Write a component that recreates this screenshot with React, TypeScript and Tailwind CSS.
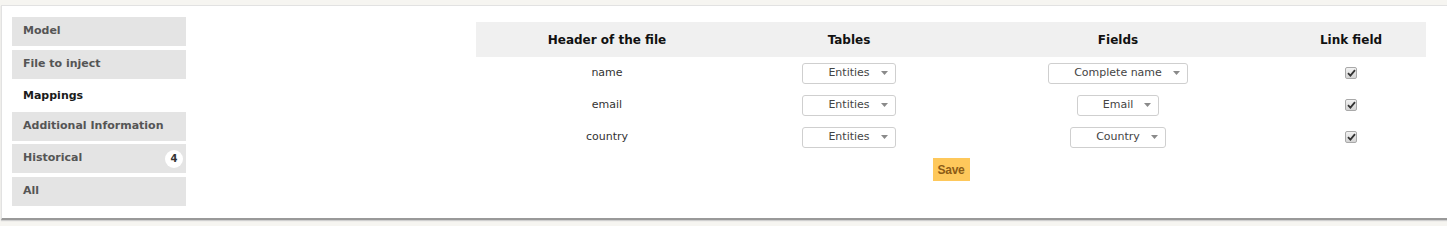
import React from 'react';

const tabs = [
  { label: 'Model', mt: 'mt-0' },
  { label: 'File to inject', mt: 'mt-[4px]' },
  { label: 'Mappings', mt: 'mt-[3px]', active: true },
  { label: 'Additional Information', mt: 'mt-[1px]' },
  { label: 'Historical', mt: 'mt-[3px]', badge: 4 },
  { label: 'All', mt: 'mt-[4px]' },
];

const rows = [
  { header: 'name', table: 'Entities', field: 'Complete name' },
  { header: 'email', table: 'Entities', field: 'Email' },
  { header: 'country', table: 'Entities', field: 'Country' },
];

const Select: React.FC<{ value: string }> = ({ value }) => (
  <div className="h-[21px] flex items-center gap-[11px] pl-[25px] pr-[7px] border border-[#cfcfcf] rounded-[3px] bg-white text-[11px] text-[#444]">
    <span>{value}</span>
    <svg width="7" height="4" viewBox="0 0 7 4">
      <path d="M0 0 L7 0 L3.5 4 Z" fill="#8a8a8a" />
    </svg>
  </div>
);

const Check: React.FC = () => (
  <div className="w-[12px] h-[12px] rounded-[2px] border border-[#a9a9a9] bg-gradient-to-b from-[#f2f2f2] to-[#d4d4d4] flex items-center justify-center">
    <svg width="9" height="8" viewBox="0 0 9 8">
      <path d="M1 4.2 L3.4 6.6 L8 1.2" fill="none" stroke="#333" strokeWidth="1.8" />
    </svg>
  </div>
);

const App: React.FC = () => {
  return (
    <div className="h-[226px] bg-[#f6f5f1] pt-[5px] font-['DejaVu_Sans',sans-serif]">
      <div className="ml-px h-[215px] bg-white border-t border-l border-[#e2e2e2] border-b-2 border-b-[#999] shadow-[0_1px_1px_#d0d0d0] flex pl-[10px] pt-[11px]">
        <div className="w-[174px] flex flex-col">
          {tabs.map((t) => (
            <div
              key={t.label}
              className={`${t.mt} h-[29px] flex items-center justify-between pl-[11px] pr-[3px] text-[11px] font-bold ${
                t.active ? 'bg-white text-[#1a1a1a]' : 'bg-[#e4e4e4] text-[#555]'
              }`}
            >
              <span>{t.label}</span>
              {t.badge !== undefined && (
                <span className="w-[18px] h-[18px] rounded-full bg-white flex items-center justify-center text-[10px] text-[#333]">
                  {t.badge}
                </span>
              )}
            </div>
          ))}
        </div>
        <div className="ml-[290px] mt-[5px] w-[950px] flex flex-col">
          <div className="grid grid-cols-[262px_222px_316px_150px] h-[35px] bg-[#f0f0f0] items-center text-[12px] font-bold text-[#111] text-center">
            <div>Header of the file</div>
            <div>Tables</div>
            <div>Fields</div>
            <div>Link field</div>
          </div>
          {rows.map((r) => (
            <div key={r.header} className="grid grid-cols-[262px_222px_316px_150px] h-[32px] items-center text-[11px] text-[#333]">
              <div className="text-center pt-px">{r.header}</div>
              <div className="flex justify-center">
                <Select value={r.table} />
              </div>
              <div className="flex justify-center">
                <Select value={r.field} />
              </div>
              <div className="flex justify-center">
                <Check />
              </div>
            </div>
          ))}
          <div className="flex justify-center mt-[5px]">
            <button className="h-[23px] w-[37px] bg-[#fec85b] text-[#8d5c16] text-[12px] font-bold font-['Liberation_Sans',sans-serif] tracking-[-0.3px]">
              Save
            </button>
          </div>
        </div>
      </div>
    </div>
  );
};

export default App;
